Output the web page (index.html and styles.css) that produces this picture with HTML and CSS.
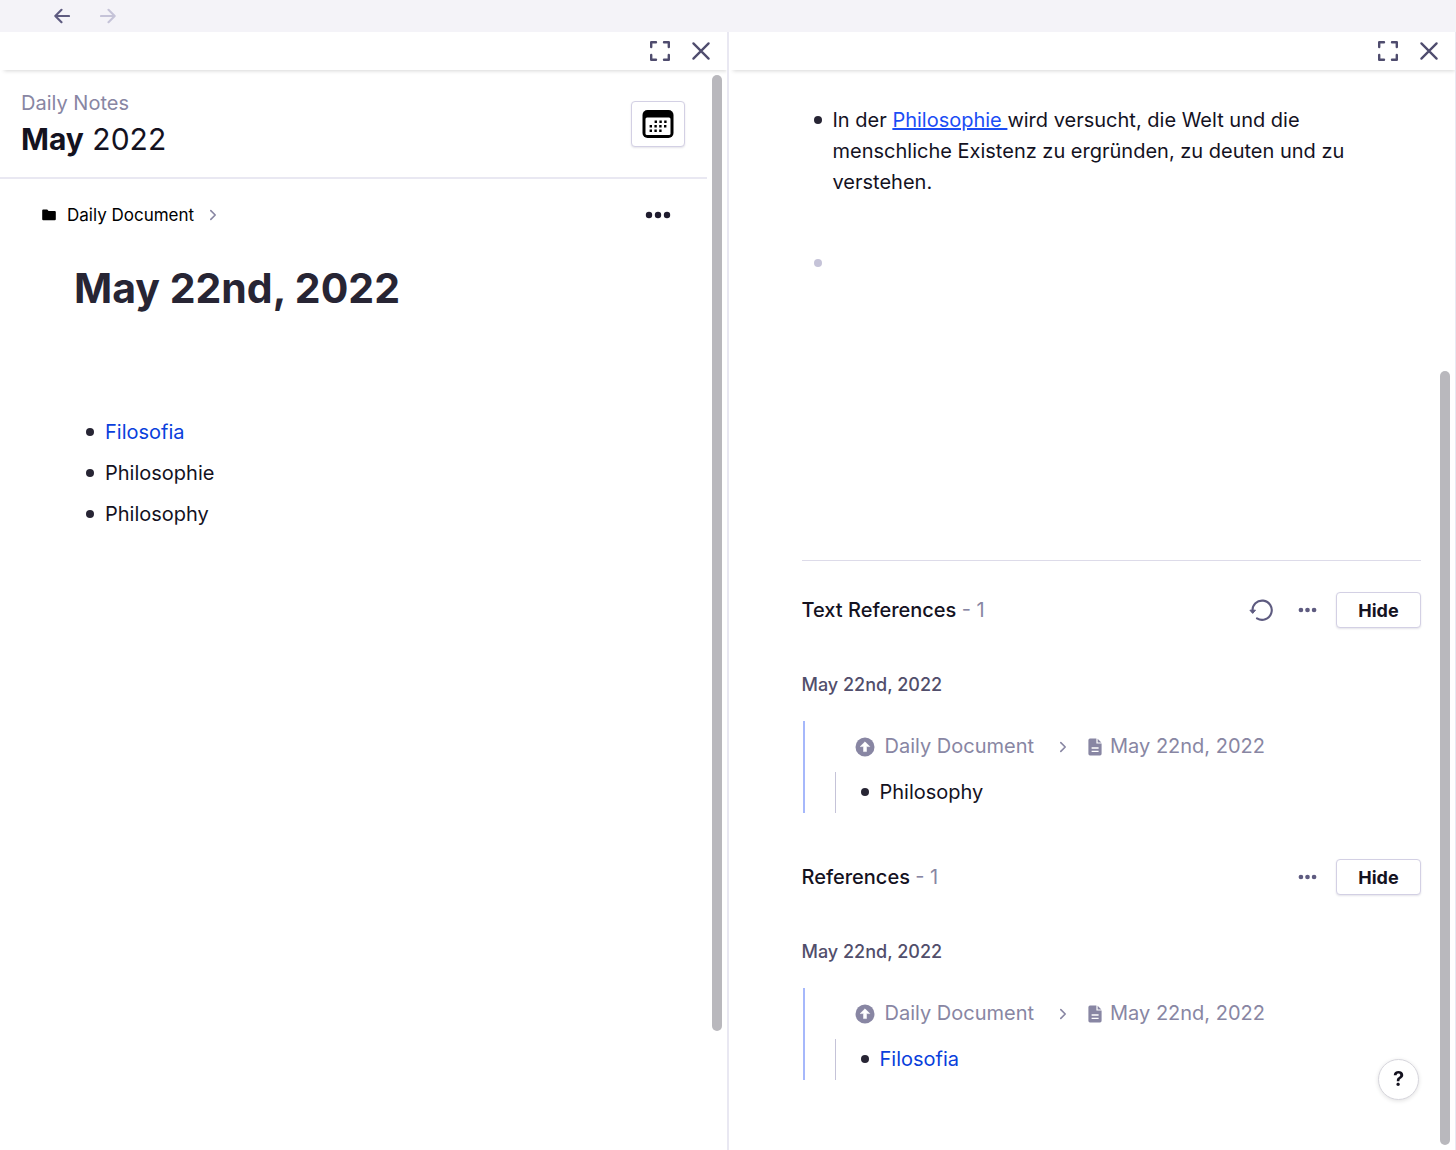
FILE: index.html
```html
<!DOCTYPE html>
<html lang="en">
	<head>
		<meta charset="utf-8">
		<title>Daily Notes</title>
		<link rel="stylesheet" href="styles.css">
	</head>

	<body>
		<!-- shared icons -->
		<svg class="sprite" aria-hidden="true">
			<symbol id="expand" viewBox="0 0 20 20">
				<path d="M1.2 6V1.2H6M14 1.2H18.8V6M18.8 14V18.8H14M6 18.8H1.2V14" fill="none" stroke="currentColor" stroke-width="2.4" stroke-linecap="round" stroke-linejoin="round"/>
			</symbol>
			<symbol id="close" viewBox="0 0 20 20">
				<path d="M2.4 2.4L17.6 17.6M17.6 2.4L2.4 17.6" fill="none" stroke="currentColor" stroke-width="2.3" stroke-linecap="round"/>
			</symbol>
			<symbol id="dots" viewBox="0 0 26 8">
				<circle cx="4" cy="4" r="3.2"/><circle cx="13" cy="4" r="3.2"/><circle cx="22" cy="4" r="3.2"/>
			</symbol>
			<symbol id="chevron" viewBox="0 0 8 12">
				<path d="M1.8 1.6L6.2 6L1.8 10.4" fill="none" stroke="currentColor" stroke-width="1.6" stroke-linecap="round" stroke-linejoin="round"/>
			</symbol>
			<symbol id="up" viewBox="0 0 20 20">
				<circle cx="10" cy="10" r="9.5"/>
				<path d="M10 4.8L14.8 9.6H11.5V14.6H8.5V9.6H5.2Z" fill="#fff" stroke="#fff" stroke-width="0.5" stroke-linejoin="round"/>
			</symbol>
			<symbol id="doc" viewBox="0 0 14 18">
				<path d="M2 0.5H8.4V5.6H13.6V15.8Q13.6 17.5 12 17.5H2Q0.4 17.5 0.4 15.8V2.2Q0.4 0.5 2 0.5Z"/>
				<path d="M9.6 0.8L13.4 4.6H9.6Z"/>
				<path d="M3.6 10H10.6M3.6 13.4H10.6" stroke="#fff" stroke-width="1.4"/>
			</symbol>
		</svg>

		<nav class="topbar">
			<button class="icon-btn" aria-label="Back">
				<svg width="16" height="16" viewBox="0 0 16 16"><path d="M15 8H1.5M7.5 1.8L1.3 8L7.5 14.2" fill="none" stroke="currentColor" stroke-width="2.1" stroke-linecap="round" stroke-linejoin="round"/></svg>
			</button>
			<button class="icon-btn" aria-label="Forward" disabled>
				<svg width="16" height="16" viewBox="0 0 16 16"><path d="M1 8H14.5M8.5 1.8L14.7 8L8.5 14.2" fill="none" stroke="currentColor" stroke-width="2.1" stroke-linecap="round" stroke-linejoin="round"/></svg>
			</button>
		</nav>

		<main class="panes">
			<section class="pane">
				<div class="pane-bar">
					<button class="icon-btn" aria-label="Maximize"><svg width="20" height="20"><use href="#expand"/></svg></button>
					<button class="icon-btn" aria-label="Close"><svg width="20" height="20"><use href="#close"/></svg></button>
				</div>
				<div class="pane-body">
					<div class="content">
						<header class="notes-head">
							<div>
								<div class="notes-label">Daily Notes</div>
								<div class="notes-month"><b>May</b> 2022</div>
							</div>
							<button class="box-btn calendar" aria-label="Calendar">
								<svg width="32" height="28" viewBox="0 0 32 28">
									<rect x="0.5" y="0" width="31" height="28" rx="5"/>
									<rect x="3.5" y="7.5" width="25" height="17.5" rx="1.5" fill="#fff"/>
									<path d="M12.6 11.8H25M7.6 16.3H25M7.6 20.8H20" fill="none" stroke="currentColor" stroke-width="2.4" stroke-dasharray="2.4 2.4"/>
								</svg>
							</button>
						</header>
						<div class="doc-bar">
							<svg width="14" height="12" viewBox="0 0 14 12"><path d="M1.3 0.5H5.2L6.6 2H12.7Q13.8 2 13.8 3.1V10.2Q13.8 11.3 12.7 11.3H1.3Q0.2 11.3 0.2 10.2V1.6Q0.2 0.5 1.3 0.5Z"/></svg>
							<a class="doc-link" href="#">Daily Document</a>
							<svg class="muted" width="8" height="12"><use href="#chevron"/></svg>
							<button class="icon-btn more" aria-label="More"><svg width="26" height="8"><use href="#dots"/></svg></button>
						</div>
						<h1>May 22nd, 2022</h1>
						<ul class="bullets day-list">
							<li><a href="#">Filosofia</a></li>
							<li>Philosophie</li>
							<li>Philosophy</li>
						</ul>
					</div>
					<div class="scroll"><div class="thumb"></div></div>
				</div>
			</section>

			<section class="pane">
				<div class="pane-bar">
					<button class="icon-btn" aria-label="Maximize"><svg width="20" height="20"><use href="#expand"/></svg></button>
					<button class="icon-btn" aria-label="Close"><svg width="20" height="20"><use href="#close"/></svg></button>
				</div>
				<div class="pane-body">
					<div class="content doc">
						<ul class="bullets doc-list" lang="de">
							<li><span>In der <a class="ref" href="#">Philosophie </a>wird versucht, die Welt und die menschliche Existenz zu ergründen, zu deuten und zu verstehen.</span></li>
							<li class="empty"></li>
						</ul>

						<section class="refs">
							<div class="refs-head">
								<h2>Text References <span>- 1</span></h2>
								<button class="icon-btn" aria-label="Refresh">
									<svg width="24" height="22" viewBox="0 0 24 22"><path d="M3.6 12.2A9.6 9.6 0 1 1 8 19.3" fill="none" stroke="currentColor" stroke-width="2.1" stroke-linecap="round"/><path d="M0.9 11.2H6.5L3.7 14.4Z" stroke="currentColor" stroke-linejoin="round"/></svg>
								</button>
								<button class="icon-btn" aria-label="More"><svg width="19" height="6"><use href="#dots"/></svg></button>
								<button class="box-btn hide">Hide</button>
							</div>
							<h3>May 22nd, 2022</h3>
							<div class="ref-block">
								<div class="crumbs">
									<svg width="20" height="20"><use href="#up"/></svg>
									<a href="#">Daily Document</a>
									<svg class="sep" width="8" height="12"><use href="#chevron"/></svg>
									<svg width="14" height="18"><use href="#doc"/></svg>
									<a href="#">May 22nd, 2022</a>
								</div>
								<ul class="bullets nested">
									<li>Philosophy</li>
								</ul>
							</div>
						</section>

						<section class="refs">
							<div class="refs-head">
								<h2>References <span>- 1</span></h2>
								<button class="icon-btn" aria-label="More"><svg width="19" height="6"><use href="#dots"/></svg></button>
								<button class="box-btn hide">Hide</button>
							</div>
							<h3>May 22nd, 2022</h3>
							<div class="ref-block">
								<div class="crumbs">
									<svg width="20" height="20"><use href="#up"/></svg>
									<a href="#">Daily Document</a>
									<svg class="sep" width="8" height="12"><use href="#chevron"/></svg>
									<svg width="14" height="18"><use href="#doc"/></svg>
									<a href="#">May 22nd, 2022</a>
								</div>
								<ul class="bullets nested">
									<li><a href="#">Filosofia</a></li>
								</ul>
							</div>
						</section>
					</div>
					<div class="scroll bottom"><div class="thumb"></div></div>
				</div>
			</section>
		</main>

		<button class="help" aria-label="Help">?</button>
	</body>
</html>
```
FILE: styles.css
```css
* {
	box-sizing: border-box;
}

body {
	display: flex;
	flex-direction: column;
	min-height: 100vh;
	margin: 0;
	background: #fff;
	color: #14121f;
	font-family: Inter, "Liberation Sans", sans-serif;
	font-size: 20px;
	line-height: 31px;
}

h1, h2, h3, ul {
	margin: 0;
	padding: 0;
}

a {
	color: #0a3fdc;
	text-decoration: none;
}

button {
	font: inherit;
	color: inherit;
	cursor: pointer;
}

svg {
	display: block;
	flex: none;
	fill: currentColor;
}

.sprite {
	position: absolute;
	width: 0;
	height: 0;
}

.icon-btn {
	padding: 0;
	border: 0;
	background: none;
	color: #5e5b80;
}

.icon-btn:disabled {
	color: #c5c3d8;
}

.box-btn {
	display: flex;
	align-items: center;
	justify-content: center;
	border: 1px solid #d3d0e4;
	border-radius: 4px;
	background: #fff;
	box-shadow: 0 1px 2px rgba(30, 25, 70, 0.12);
}

.topbar {
	display: flex;
	align-items: center;
	gap: 30px;
	height: 32px;
	padding-left: 54px;
	background: #f4f3f8;
}

/* panes */
.panes {
	display: flex;
	flex: 1;
	border-bottom: 1px solid #e4e3ec;
}

.pane {
	display: flex;
	flex: 1;
	flex-direction: column;
	min-width: 0;
	border-right: 1px solid #e9e8f2;
}

.pane + .pane {
	border-left: 1px solid #e9e8f2;
}

.pane-bar {
	display: flex;
	align-items: center;
	justify-content: flex-end;
	gap: 21px;
	height: 38px;
	padding-right: 16px;
	box-shadow: 2px 3px 4px -2px rgba(0, 0, 0, 0.16);
	clip-path: inset(0 0 -8px 0);
}

.pane-bar .icon-btn {
	color: #4f4c6e;
}

.pane-body {
	display: flex;
	flex: 1;
}

.content {
	flex: 1;
	min-width: 0;
}

.scroll {
	display: flex;
	flex-direction: column;
	width: 20px;
	padding: 5px;
}

.scroll.bottom {
	justify-content: flex-end;
}

.thumb {
	height: 89.3%;
	border-radius: 5px;
	background: #b9b8bd;
}

.bottom .thumb {
	height: 72.3%;
}

/* daily notes */
.notes-head {
	display: flex;
	align-items: center;
	justify-content: space-between;
	height: 109px;
	padding: 0 22px 0 21px;
	border-bottom: 2px solid #e9e8f2;
}

.notes-label {
	color: #8886a3;
}

.notes-month {
	font-size: 30px;
	line-height: 41px;
}

.calendar {
	width: 54px;
	height: 46px;
	color: #000;
}

.doc-bar {
	display: flex;
	align-items: center;
	height: 72px;
	padding: 0 36px 0 42px;
	color: #000;
	font-size: 17px;
}

.doc-link {
	margin: 0 15px 0 11px;
	color: inherit;
}

.more {
	margin-left: auto;
	color: #1f1c2e;
}

.muted {
	color: #8886a3;
}

h1 {
	margin: 10px 0 102px 74px;
	color: #272534;
	font-size: 41px;
	font-weight: 700;
	line-height: 54px;
}

.bullets {
	display: flex;
	flex-direction: column;
	gap: 10px;
	list-style: none;
}

.bullets li {
	display: flex;
	gap: 11px;
	min-height: 31px;
}

.bullets li::before {
	content: "";
	flex: none;
	width: 8px;
	height: 8px;
	margin-top: 11px;
	border-radius: 50%;
	background: #272534;
}

.day-list {
	margin: 0 20px 0 86px;
}

/* document */
.doc {
	padding: 35px 14px 70px 73px;
}

.doc-list {
	gap: 50px;
	margin-bottom: 281px;
	padding: 0 50px 0 12px;
}

.bullets .empty::before {
	background: #c5c3d8;
}

.ref {
	color: #1b4df5;
	text-decoration: underline;
}

.refs {
	padding-top: 46px;
}

.doc-list + .refs {
	padding-top: 31px;
	border-top: 1px solid #dddbe9;
}

.refs-head {
	display: flex;
	align-items: center;
}

h2 {
	margin-right: auto;
	font-size: 20px;
	font-weight: 500;
}

h2 span {
	color: #8886a3;
	font-weight: 400;
}

.refs-head .icon-btn {
	margin-left: 25px;
}

.hide {
	width: 85px;
	height: 36px;
	margin-left: 19px;
	font-size: 18px;
	font-weight: 700;
}

h3 {
	margin: 45px 0 24px;
	color: #514e6b;
	font-size: 18px;
	font-weight: 500;
	line-height: 24px;
}

.ref-block {
	margin-left: 1px;
	padding: 10px 0 0 30px;
	border-left: 2px solid #a6b8fb;
}

.crumbs {
	display: flex;
	align-items: center;
	margin-bottom: 10px;
	padding-left: 20px;
	color: #8886a3;
}

.crumbs a {
	margin-left: 10px;
	color: inherit;
}

.crumbs svg + a:last-child {
	margin-left: 8px;
}

.sep {
	margin: 0 21px 0 25px;
}

.nested {
	padding: 5px 0 5px 25px;
	border-left: 1px solid #c5c3d8;
}

.help {
	position: fixed;
	right: 37px;
	bottom: 50px;
	width: 41px;
	height: 41px;
	padding: 0;
	border: 1px solid #d6d5dc;
	border-radius: 50%;
	background: #fff;
	box-shadow: 0 1px 4px rgba(0, 0, 0, 0.12);
	font-weight: 700;
}
```
